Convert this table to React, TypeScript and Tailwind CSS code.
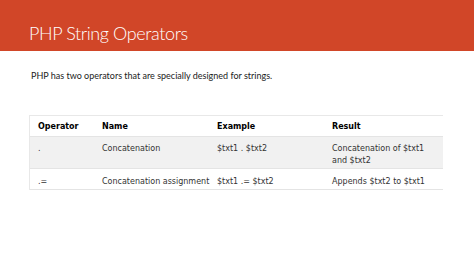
export default function App() {
  const rows = [
    { op: ".", name: "Concatenation", ex: "$txt1 . $txt2", res: "Concatenation of $txt1 and $txt2", shade: true },
    { op: ".=", name: "Concatenation assignment", ex: "$txt1 .= $txt2", res: "Appends $txt2 to $txt1", shade: false },
  ];

  return (
    <div className="w-[474px] h-[266px] bg-white overflow-hidden">
      <div className="h-[51px] bg-[#d14628] flex items-end pl-[29px] pb-[9px]">
        <h1 className="text-white text-[18px] font-light leading-none tracking-[-0.4px] font-['Lato',sans-serif]">
          PHP String Operators
        </h1>
      </div>
      <p className="mt-[18px] ml-[31px] text-[9px] text-[#222] font-['Lato',sans-serif]">
        PHP has two operators that are specially designed for strings.
      </p>
      <div className="mt-[32px] ml-[29px] w-[414px] border-l border-t border-[#e8e8e8] font-['DejaVu_Sans',sans-serif] text-[8px] text-[#333]">
        <div className="grid grid-cols-[72px_115px_115px_1fr] h-[21px] items-center font-bold text-black border-b border-[#e4e4e4] pt-[2px]">
          <div className="pl-[8px]">Operator</div>
          <div>Name</div>
          <div>Example</div>
          <div>Result</div>
        </div>
        {rows.map((r) => (
          <div
            key={r.op}
            className={`grid grid-cols-[72px_115px_115px_1fr] border-b border-[#e4e4e4] pt-[6px] ${r.shade ? "bg-[#f1f1f1] h-[32px]" : "bg-white h-[21px] pt-[7px]"}`}
          >
            <div className="pl-[8px]">{r.op}</div>
            <div>{r.name}</div>
            <div>{r.ex}</div>
            <div className="leading-[12px] pr-[8px]">{r.res}</div>
          </div>
        ))}
      </div>
    </div>
  );
}
